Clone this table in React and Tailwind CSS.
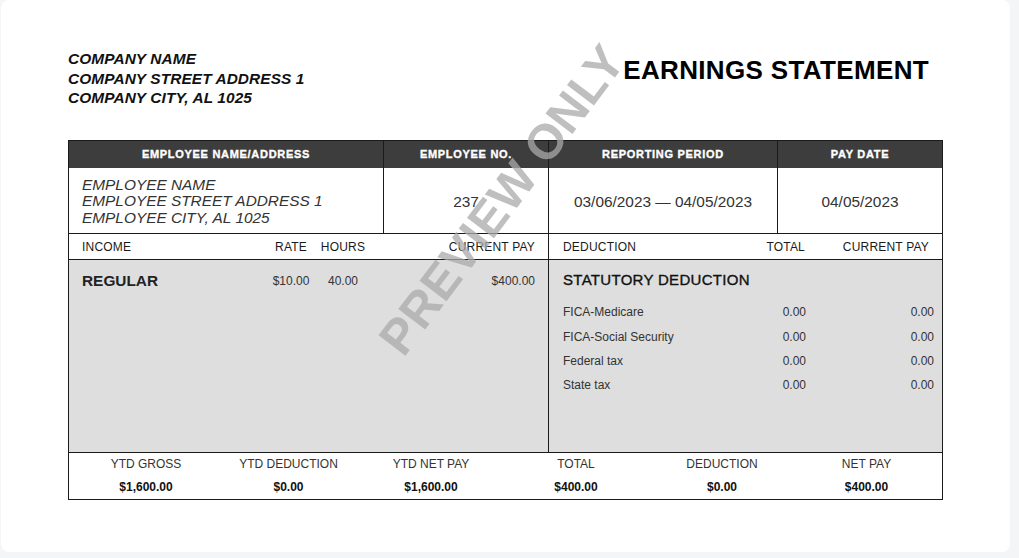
export default function App() {
  const hdrCell =
    "flex items-center justify-center text-[11px] font-bold text-white tracking-[0.7px] [-webkit-text-stroke:0.35px_white]";
  return (
    <div className="w-[1019px] h-[558px] bg-[#f4f5f7] font-['Liberation_Sans',Arial,sans-serif] text-[#222]">
      <div className="relative ml-[1px] w-[1009px] h-[552px] bg-white rounded-lg pl-[67px] overflow-hidden">
        {/* Top header */}
        <div className="w-[875px] h-[140px] pt-[49px] flex justify-between items-start">
          <div className="text-[15.4px] leading-[19.5px] font-bold italic tracking-[0.1px] text-[#111]">
            <div>COMPANY NAME</div>
            <div>COMPANY STREET ADDRESS 1</div>
            <div>COMPANY CITY, AL 1025</div>
          </div>
          <div className="mt-[6px] mr-[14px] text-[26px] leading-[30px] font-bold tracking-[0.35px] text-black">
            EARNINGS STATEMENT
          </div>
        </div>

        {/* Table */}
        <div className="w-[875px] border border-[#1a1a1a]">
          {/* header row */}
          <div className="grid grid-cols-[315px_165px_229px_1fr] h-[27px] bg-[#3d3d3d]">
            <div className={hdrCell + " border-r border-[#1a1a1a]"}>EMPLOYEE NAME/ADDRESS</div>
            <div className={hdrCell + " border-r border-[#1a1a1a]"}>EMPLOYEE NO.</div>
            <div className={hdrCell + " border-r border-[#1a1a1a]"}>REPORTING PERIOD</div>
            <div className={hdrCell}>PAY DATE</div>
          </div>

          {/* info row */}
          <div className="grid grid-cols-[315px_165px_229px_1fr] h-[66px] border-b border-[#1a1a1a] text-[15.4px] text-[#333]">
            <div className="flex flex-col justify-center pl-[13px] pt-[2px] italic leading-[16.5px] border-r border-[#1a1a1a]">
              <div>EMPLOYEE NAME</div>
              <div>EMPLOYEE STREET ADDRESS 1</div>
              <div>EMPLOYEE CITY, AL 1025</div>
            </div>
            <div className="flex items-center justify-center pt-[2px] border-r border-[#1a1a1a]">237</div>
            <div className="flex items-center justify-center pt-[2px] border-r border-[#1a1a1a]">
              03/06/2023 — 04/05/2023
            </div>
            <div className="flex items-center justify-center pt-[2px]">04/05/2023</div>
          </div>

          {/* sub header */}
          <div className="grid grid-cols-[480px_1fr] h-[26px] border-b border-[#1a1a1a] text-[12px] tracking-[0.2px] text-[#1a1a1a]">
            <div className="grid grid-cols-[180px_58px_46px_1fr] items-center pl-[13px] pr-[13px] border-r border-[#1a1a1a]">
              <div>INCOME</div>
              <div className="text-center">RATE</div>
              <div className="text-center">HOURS</div>
              <div className="text-right">CURRENT PAY</div>
            </div>
            <div className="grid grid-cols-[1fr_60px_124px] items-center pl-[14px] pr-[13px]">
              <div>DEDUCTION</div>
              <div className="text-right">TOTAL</div>
              <div className="text-right">CURRENT PAY</div>
            </div>
          </div>

          {/* body */}
          <div className="grid grid-cols-[480px_1fr] h-[193px] border-b border-[#1a1a1a] bg-[#dedede] text-[#333]">
            <div className="pl-[13px] pr-[13px] pt-[9px] border-r border-[#1a1a1a]">
              <div className="grid grid-cols-[180px_58px_46px_1fr] items-center h-[20px]">
                <div className="text-[15.4px] font-bold text-[#222]">REGULAR</div>
                <div className="text-[12px] text-center">$10.00</div>
                <div className="text-[12px] text-center">40.00</div>
                <div className="text-[12px] text-right">$400.00</div>
              </div>
            </div>
            <div className="pl-[14px] pr-[8px] pt-[10px]">
              <div className="h-[20px] flex items-center text-[15px] tracking-[0.3px] text-[#111] [-webkit-text-stroke:0.35px_#111]">
                STATUTORY DEDUCTION
              </div>
              <div className="mt-[10px] text-[12px]">
                {[
                  ["FICA-Medicare", "0.00", "0.00"],
                  ["FICA-Social Security", "0.00", "0.00"],
                  ["Federal tax", "0.00", "0.00"],
                  ["State tax", "0.00", "0.00"],
                ].map(([l, a, b]) => (
                  <div key={l} className="grid grid-cols-[1fr_60px_128px] items-center h-[24.4px]">
                    <div>{l}</div>
                    <div className="text-right">{a}</div>
                    <div className="text-right">{b}</div>
                  </div>
                ))}
              </div>
            </div>
          </div>

          {/* footer */}
          <div className="grid grid-cols-[154px_131px_154px_136px_156px_1fr] h-[46px] text-[12px]">
            {[
              ["YTD GROSS", "$1,600.00", ""],
              ["YTD DEDUCTION", "$0.00", ""],
              ["YTD NET PAY", "$1,600.00", ""],
              ["TOTAL", "$400.00", ""],
              ["DEDUCTION", "$0.00", ""],
              ["NET PAY", "$400.00", "pr-[9px]"],
            ].map(([l, v, extra]) => (
              <div key={l} className={"flex flex-col items-center pt-[4px] " + extra}>
                <div className="leading-[14px] text-[#333]">{l}</div>
                <div className="mt-[9px] leading-[14px] font-bold text-[#111]">{v}</div>
              </div>
            ))}
          </div>
        </div>

        {/* watermark */}
        <div className="pointer-events-none absolute left-[501px] top-[200px] -translate-x-1/2 -translate-y-1/2 rotate-[-53deg] whitespace-nowrap text-[49px] leading-none font-bold text-[#aaaaaa]/75">
          PREVIEW ONLY
        </div>
      </div>
    </div>
  );
}
